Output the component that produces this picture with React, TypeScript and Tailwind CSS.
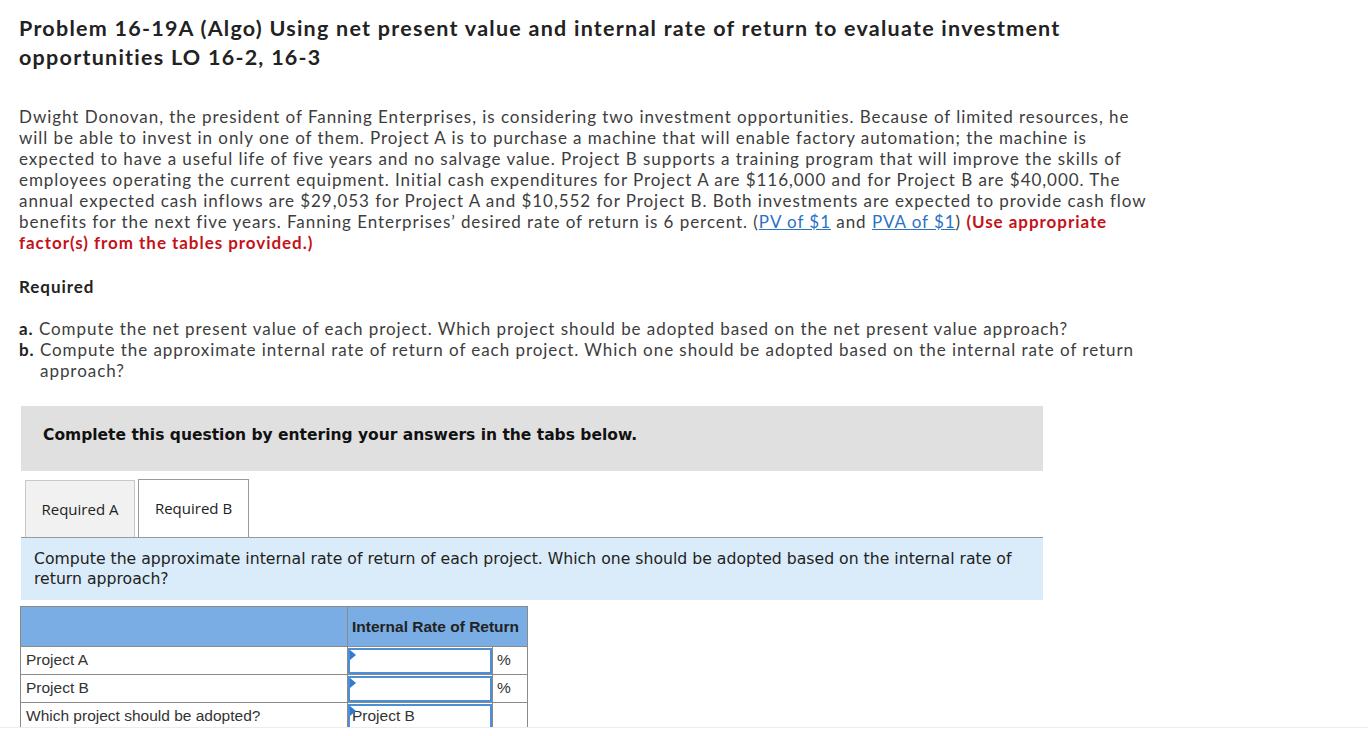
import React from "react";

const body = { fontFamily: "Lato, 'Open Sans', sans-serif" };
const verdana = { fontFamily: "'DejaVu Sans', Verdana, sans-serif" };
const arial = { fontFamily: "'Liberation Sans', Arial, sans-serif" };

function Marker() {
  return (
    <span className="absolute left-0 top-0 h-0 w-0 border-y-[5px] border-l-[6px] border-y-transparent border-l-[#2f7bd0]" />
  );
}

function AnswerInput({ value = "" }: { value?: string }) {
  return (
    <div className="relative h-[26px] border-2 border-[#4d8fd6] bg-white px-[2px] text-[15.5px] leading-[20px] text-[#333]">
      <Marker />
      {value}
    </div>
  );
}

export default function App() {
  const lines = [
    "Dwight Donovan, the president of Fanning Enterprises, is considering two investment opportunities. Because of limited resources, he",
    "will be able to invest in only one of them. Project A is to purchase a machine that will enable factory automation; the machine is",
    "expected to have a useful life of five years and no salvage value. Project B supports a training program that will improve the skills of",
    "employees operating the current equipment. Initial cash expenditures for Project A are $116,000 and for Project B are $40,000. The",
    "annual expected cash inflows are $29,053 for Project A and $10,552 for Project B. Both investments are expected to provide cash flow",
  ];

  return (
    <div className="relative h-[736px] overflow-hidden bg-white">
      <div className="h-[727px] overflow-hidden pl-[19px] pt-[14px]">
        <h1 style={body} className="text-[21.5px] font-bold leading-[29px] tracking-[1.25px] text-[#222]">
          Problem 16-19A (Algo) Using net present value and internal rate of return to evaluate investment
          <br />
          opportunities LO 16-2, 16-3
        </h1>

        <div style={body} className="mt-[34px] text-[17px] leading-[21px] tracking-[0.95px] text-[#3d3d3d] whitespace-nowrap">
          {lines.map((l) => (
            <div key={l}>{l}</div>
          ))}
          <div>
            benefits for the next five years. Fanning Enterprises’ desired rate of return is 6 percent. (
            <span className="text-[#2a72c4] underline">PV of $1</span> and{" "}
            <span className="text-[#2a72c4] underline">PVA of $1</span>){" "}
            <span className="font-bold text-[#c4121a]">(Use appropriate</span>
          </div>
          <div className="font-bold text-[#c4121a]">factor(s) from the tables provided.)</div>
        </div>

        <div style={body} className="mt-[23px] text-[17px] font-bold leading-[21px] tracking-[0.95px] text-[#222]">
          Required
        </div>

        <div style={body} className="mt-[21px] text-[17px] leading-[21px] tracking-[0.95px] text-[#3d3d3d] whitespace-nowrap">
          <div>
            <b className="text-[#222]">a.</b> Compute the net present value of each project. Which project should be adopted based on the net present value approach?
          </div>
          <div>
            <b className="text-[#222]">b.</b> Compute the approximate internal rate of return of each project. Which one should be adopted based on the internal rate of return
          </div>
          <div className="pl-[21px]">approach?</div>
        </div>

        <div className="ml-[2px] mt-[25px] w-[1022px]">
          <div style={verdana} className="flex h-[65px] items-center bg-[#e0e0e0] pb-[6px] pl-[22px] text-[15.5px] font-bold text-[#111]">
            Complete this question by entering your answers in the tabs below.
          </div>

          <div style={{ fontFamily: "'Open Sans', sans-serif" }} className="mt-[8px] flex gap-[3px] border-b border-[#9a9a9a] pl-[4px] text-[15px] text-[#222]">
            <div className="mt-[1px] flex h-[57px] w-[110px] items-center justify-center border border-b-0 border-[#c8c8c8] bg-[#f1f1f1]">
              Required A
            </div>
            <div className="-mb-px flex h-[58px] w-[111px] items-center justify-center border border-b-0 border-[#9a9a9a] bg-white">
              Required B
            </div>
          </div>

          <div style={verdana} className="h-[62px] whitespace-nowrap bg-[#daecf9] px-[13px] pt-[11px] text-[15.7px] leading-[20px] text-[#222]">
            Compute the approximate internal rate of return of each project. Which one should be adopted based on the internal rate of
            <br />
            return approach?
          </div>

          <table style={arial} className="mt-[6px] w-[508px] -ml-px border-collapse text-[15.5px] text-[#333]">
            <tbody>
              <tr className="h-[40px] bg-[#79ade4]">
                <td className="w-[327px] border border-[#8a8a8a]"></td>
                <td colSpan={2} className="border border-[#8a8a8a] px-[4px] pt-[0px] text-left font-bold text-[#222] whitespace-nowrap">
                  Internal Rate of Return
                </td>
              </tr>
              <tr className="h-[28px]">
                <td className="border border-[#8a8a8a] px-[5px] pb-[2px]">Project A</td>
                <td className="w-[145px] border border-[#8a8a8a] p-0">
                  <AnswerInput />
                </td>
                <td className="border border-[#8a8a8a] px-[4px] pb-[2px]">%</td>
              </tr>
              <tr className="h-[28px]">
                <td className="border border-[#8a8a8a] px-[5px] pb-[2px]">Project B</td>
                <td className="border border-[#8a8a8a] p-0">
                  <AnswerInput />
                </td>
                <td className="border border-[#8a8a8a] px-[4px] pb-[2px]">%</td>
              </tr>
              <tr className="h-[28px]">
                <td className="border border-[#8a8a8a] px-[5px] pb-[2px]">Which project should be adopted?</td>
                <td className="border border-[#8a8a8a] p-0">
                  <AnswerInput value="Project B" />
                </td>
                <td className="border border-[#8a8a8a]"></td>
              </tr>
            </tbody>
          </table>
        </div>
      </div>
      <div className="h-px bg-[#ececec]" />
    </div>
  );
}
